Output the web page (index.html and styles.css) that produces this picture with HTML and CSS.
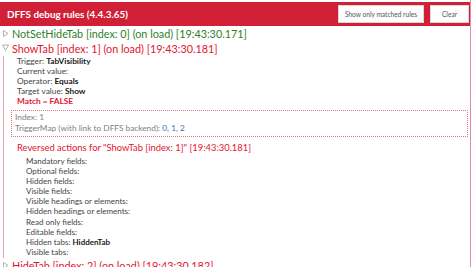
FILE: index.html
```html
<!DOCTYPE html>
<html>
<head>
<meta charset="utf-8">
<link rel="stylesheet" href="styles.css">
</head>
<body>
<div class="panel">
  <div class="header">
    <div class="title">DFFS debug rules (4.4.3.65)</div>
    <div class="buttons">
      <button class="btn btn-wide">Show only matched rules</button>
      <button class="btn btn-clear">Clear</button>
    </div>
  </div>
  <div class="content">
    <div class="rule">
      <div class="rule-head green">
        <svg class="tri" width="9" height="15" viewBox="0 0 9 15"><path d="M3.5 4.5 L8 7.5 L3.5 10.5 Z" fill="none" stroke="#a8a8a8" stroke-width="0.9"/></svg>
        <span>NotSetHideTab [index: 0] (on load) [19:43:30.171]</span>
      </div>
    </div>
    <div class="rule">
      <div class="rule-head red">
        <svg class="tri" width="9" height="15" viewBox="0 0 9 15"><path d="M2.5 4 L8.5 4 L5.5 9.5 Z" fill="none" stroke="#a8a8a8" stroke-width="0.9"/></svg>
        <span>ShowTab [index: 1] (on load) [19:43:30.181]</span>
      </div>
      <div class="rule-body">
        <div class="details">
          <div>Trigger: <b>TabVisibility</b></div>
          <div>Current value:</div>
          <div>Operator: <b>Equals</b></div>
          <div>Target value: <b>Show</b></div>
          <div class="match">Match = FALSE</div>
        </div>
        <div class="meta">
          <div>Index: 1</div>
          <div>TriggerMap (with link to DFFS backend): <span class="link">0, 1, 2</span></div>
        </div>
        <div class="reversed">Reversed actions for "ShowTab [index: 1]" [19:43:30.181]</div>
        <div class="actions">
          <div>Mandatory fields:</div>
          <div>Optional fields:</div>
          <div>Hidden fields:</div>
          <div>Visible fields:</div>
          <div>Visible headings or elements:</div>
          <div>Hidden headings or elements:</div>
          <div>Read only fields:</div>
          <div>Editable fields:</div>
          <div>Hidden tabs: <b>HiddenTab</b></div>
          <div>Visible tabs:</div>
        </div>
      </div>
    </div>
    <div class="rule">
      <div class="rule-head red">
        <svg class="tri" width="9" height="15" viewBox="0 0 9 15"><path d="M3.5 4.5 L8 7.5 L3.5 10.5 Z" fill="none" stroke="#a8a8a8" stroke-width="0.9"/></svg>
        <span>HideTab [index: 2] (on load) [19:43:30.182]</span>
      </div>
    </div>
  </div>
</div>
</body>
</html>
```
FILE: styles.css
```css
html, body {
  margin: 0;
  padding: 0;
  background: #fff;
  overflow: hidden;
}
body {
  font-family: Lato, "Open Sans", sans-serif;
}
.panel {
  width: 471px;
  height: 267px;
  padding-top: 2px;
  border-right: 1px solid #e4909c;
  box-sizing: border-box;
  overflow: hidden;
}
.header {
  height: 24px;
  background: #d01f36;
  display: flex;
  align-items: center;
  justify-content: space-between;
  padding: 0 1px 0 7px;
}
.title {
  color: #fff;
  font-weight: 700;
  font-size: 9.9px;
}
.buttons {
  display: flex;
  gap: 6px;
}
.btn {
  height: 18px;
  background: #fff;
  border: 1px solid #d8d8d8;
  font-family: Lato, sans-serif;
  font-size: 6.6px;
  color: #555;
  padding: 0;
  margin: 0;
  white-space: nowrap;
}
.btn-wide { width: 86px; }
.btn-clear { width: 39px; }
.rule-head {
  display: flex;
  align-items: center;
  height: 15px;
  font-size: 10.8px;
  white-space: nowrap;
  line-height: 15px;
}
.tri {
  flex: none;
  margin-left: 0;
  margin-right: 3px;
}
.green { color: #2e7f1f; }
.red { color: #e3132f; }
.rule-body {
  margin-left: 3px;
  border-left: 1px solid #e8a0aa;
  padding-bottom: 1px;
}
.details {
  padding-left: 13px;
  font-size: 8.3px;
  line-height: 10px;
  color: #444;
}
.details b, .actions b {
  color: #1a1a1a;
  font-weight: 700;
}
.details .match {
  color: #e3132f;
  font-weight: 700;
}
.meta {
  margin: 4px 2px 0 7px;
  border: 1px dotted #e07888;
  padding: 1px 3px 2px;
  font-size: 8.3px;
  line-height: 11px;
  color: #808080;
}
.link { color: #3a6fb0; }
.reversed {
  margin-top: 4px;
  padding-left: 13px;
  font-size: 9.4px;
  line-height: 14px;
  color: #e3132f;
  white-space: nowrap;
}
.actions {
  padding-left: 22px;
  margin-top: 1px;
  font-size: 8px;
  line-height: 10.1px;
  color: #444;
}
```
